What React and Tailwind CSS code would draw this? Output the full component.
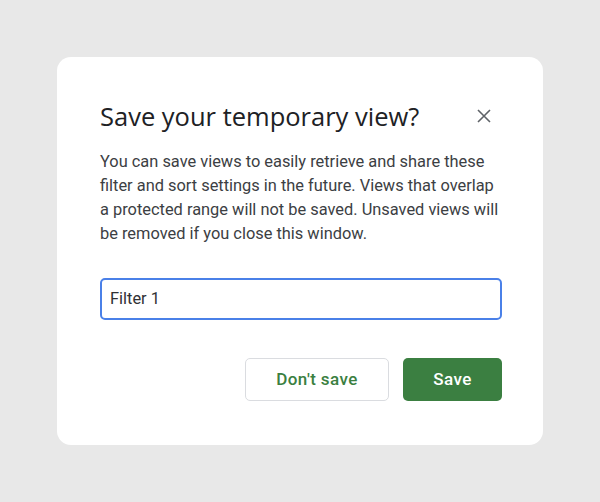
export default function App() {
  return (
    <div className="w-[600px] h-[502px] bg-[#e8e8e8] flex items-center justify-center" style={{ fontFamily: "Roboto, 'Liberation Sans', sans-serif" }}>
      <div className="w-[486px] h-[388px] bg-white rounded-[14px] pl-[43px] pr-[41px] pt-[40px] flex flex-col">
        <div className="flex items-center justify-between">
          <h1 className="text-[25.5px] leading-[38px] text-[#202124]" style={{ fontFamily: "'Open Sans', Roboto, sans-serif" }}>Save your temporary view?</h1>
          <svg width="14" height="14" viewBox="0 0 14 14" className="mr-[11px]">
            <path d="M1 1L13 13M13 1L1 13" stroke="#5f6368" strokeWidth="1.6" />
          </svg>
        </div>
        <p className="mt-[15px] text-[16.4px] leading-[24px] text-[#3c4043]">
          You can save views to easily retrieve and share these filter and sort settings in the future. Views that overlap a protected range will not be saved. Unsaved views will be removed if you close this window.
        </p>
        <div className="mt-[32px] h-[42px] border-2 border-[#4a80e8] rounded-[5px] px-[8px] flex items-center text-[16.4px] text-[#303134]">
          Filter 1
        </div>
        <div className="mt-[38px] flex justify-end gap-[14px]">
          <button className="w-[144px] h-[43px] border border-[#dadce0] rounded-[5px] text-[17px] tracking-[0.4px] font-medium text-[#3b7f41]">Don't save</button>
          <button className="w-[99px] h-[43px] bg-[#3b7f41] rounded-[5px] text-[17px] tracking-[0.4px] font-medium text-white">Save</button>
        </div>
      </div>
    </div>
  );
}
